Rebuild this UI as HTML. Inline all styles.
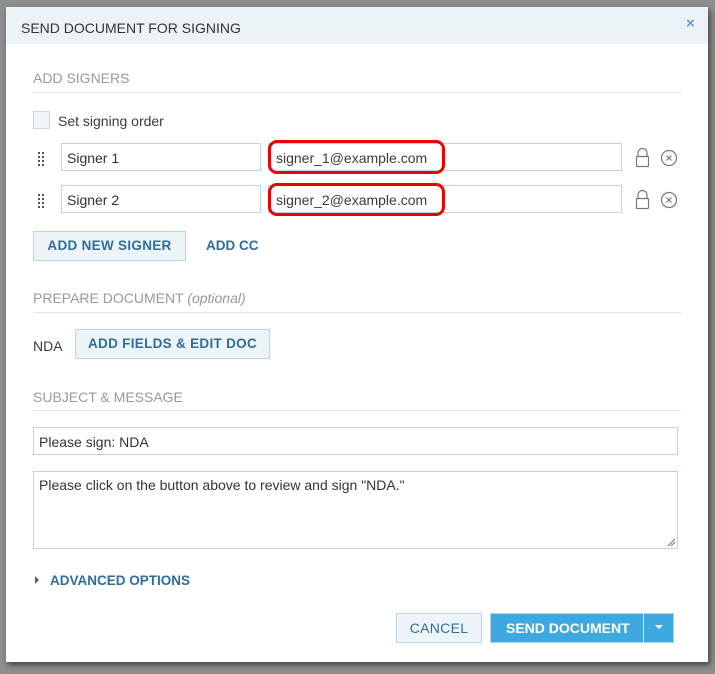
<!DOCTYPE html>
<html><head><style>
*{box-sizing:border-box;margin:0;padding:0}
body{width:715px;height:674px;background:#8f8f8f;position:relative;overflow:hidden;font-family:"Liberation Sans",sans-serif;}
#d{position:absolute;left:6px;top:7px;width:702px;height:655px;background:#fff;box-shadow:2px 3px 6px rgba(0,0,0,.55);}
.a{position:absolute;}
.hd{left:0;top:0;width:702px;height:37px;background:#ecf3f7;}
.t{font-size:14px;color:#3b3b3b;}
.sec{font-size:14px;color:#999;}
.line{height:1px;background:#e3e3e3;width:648px;left:27px;}
.in{border:1px solid #b9d5e8;background:#fff;height:28px;font-size:14px;color:#333;padding:6px 5px;}
.btn{border:1px solid #b7d5ea;background:#edf4f8;color:#2e6e9c;font-size:13.5px;font-weight:bold;text-align:center;letter-spacing:.3px;}
.red{border:3px solid #e00;border-radius:9px;}
.dot{width:2px;height:2px;background:#555;position:absolute}
</style></head><body>
<div id="d">
<div class="a hd"></div>
<div class="a t" style="left:15px;top:13px;font-size:14px;color:#333">SEND DOCUMENT FOR SIGNING</div>
<div class="a" style="left:680px;top:8px;color:#6a9ac0;font-weight:bold;font-size:15px">×</div>

<div class="a sec" style="left:27px;top:63px">ADD SIGNERS</div>
<div class="a line" style="top:85px"></div>
<div class="a" style="left:27px;top:104px;width:17px;height:18px;border:1px solid #c5dbe8;background:#eef4f8"></div>
<div class="a t" style="left:52px;top:106px">Set signing order</div>

<div class="a in" style="left:55px;top:136px;width:200px">Signer 1</div>
<div class="a in" style="left:262px;top:136px;width:354px"></div>
<div class="a red" style="left:262px;top:133px;width:177px;height:34px"></div>
<div class="a t" style="left:270px;top:143px">signer_1@example.com</div>
<div class="a in" style="left:55px;top:178px;width:200px">Signer 2</div>
<div class="a in" style="left:262px;top:178px;width:354px"></div>
<div class="a red" style="left:262px;top:176px;width:177px;height:33px"></div>
<div class="a t" style="left:270px;top:185px">signer_2@example.com</div>

<svg class="a" style="left:0;top:0" width="702" height="220">
<g fill="#555">
<rect x="32" y="145" width="2" height="2"/><rect x="36" y="145" width="2" height="2"/>
<rect x="32" y="149" width="2" height="2"/><rect x="36" y="149" width="2" height="2"/>
<rect x="32" y="153" width="2" height="2"/><rect x="36" y="153" width="2" height="2"/>
<rect x="32" y="157" width="2" height="2"/><rect x="36" y="157" width="2" height="2"/>
<rect x="32" y="187" width="2" height="2"/><rect x="36" y="187" width="2" height="2"/>
<rect x="32" y="191" width="2" height="2"/><rect x="36" y="191" width="2" height="2"/>
<rect x="32" y="195" width="2" height="2"/><rect x="36" y="195" width="2" height="2"/>
<rect x="32" y="199" width="2" height="2"/><rect x="36" y="199" width="2" height="2"/>
</g>
<g fill="none" stroke="#777" stroke-width="1.2">
<path d="M632 149v-3a4.5 4.5 0 0 1 9 0v3"/><rect x="630.5" y="149.5" width="12" height="10" rx="1"/>
<circle cx="663" cy="151" r="7.5"/><path d="M660.5 148.5l5 5M665.5 148.5l-5 5"/>
<path d="M632 191v-3a4.5 4.5 0 0 1 9 0v3"/><rect x="630.5" y="191.5" width="12" height="10" rx="1"/>
<circle cx="663" cy="193" r="7.5"/><path d="M660.5 190.5l5 5M665.5 190.5l-5 5"/>
</g>
</svg>

<div class="a btn" style="left:27px;top:224px;width:153px;height:30px;line-height:28px">ADD NEW SIGNER</div>
<div class="a" style="left:200px;top:231px;color:#2e6e9c;font-weight:bold;font-size:13.5px">ADD CC</div>

<div class="a sec" style="left:27px;top:283px">PREPARE DOCUMENT <i>(optional)</i></div>
<div class="a line" style="top:305px"></div>
<div class="a t" style="left:27px;top:331px">NDA</div>
<div class="a btn" style="left:69px;top:322px;width:195px;height:30px;line-height:28px">ADD FIELDS &amp; EDIT DOC</div>

<div class="a sec" style="left:27px;top:382px">SUBJECT &amp; MESSAGE</div>
<div class="a line" style="top:403px"></div>
<div class="a in" style="left:27px;top:420px;width:645px">Please sign: NDA</div>
<div class="a in" style="left:27px;top:464px;width:645px;height:78px;padding:5px">Please click on the button above to review and sign "NDA."</div>
<svg class="a" style="left:660px;top:530px" width="10" height="10"><path d="M2 9L9 2M5 9L9 5" stroke="#777"/></svg>

<div class="a" style="left:29px;top:569px;width:0;height:0;border-left:4px solid #2e6e9c;border-top:4px solid transparent;border-bottom:4px solid transparent"></div>
<div class="a" style="left:44px;top:566px;color:#2e6e9c;font-weight:bold;font-size:13.5px">ADVANCED OPTIONS</div>

<div class="a btn" style="left:390px;top:606px;width:86px;height:30px;line-height:28px;font-weight:normal;font-size:14px">CANCEL</div>
<div class="a" style="left:484px;top:606px;width:184px;height:30px;background:#3da9e0;border:1px solid #a9d3ee"></div>
<div class="a" style="left:500px;top:613px;color:#fff;font-weight:bold;font-size:14px">SEND DOCUMENT</div>
<div class="a" style="left:637px;top:607px;width:1px;height:28px;background:#d6eef9"></div>
<div class="a" style="left:649px;top:618px;width:0;height:0;border-top:4px solid #fff;border-left:4px solid transparent;border-right:4px solid transparent"></div>
</div>
</body></html>
